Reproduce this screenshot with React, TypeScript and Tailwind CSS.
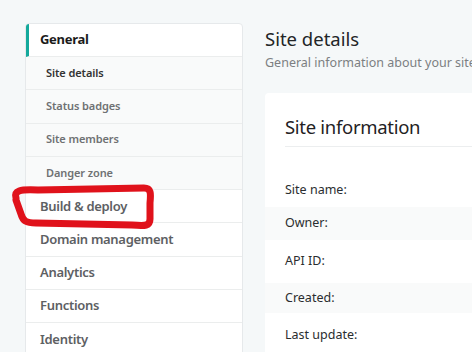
import React from "react";

const font = { fontFamily: '"Noto Sans", "Open Sans", sans-serif' };

export default function App() {
  const sub = [
    { label: "Site details", active: true },
    { label: "Status badges" },
    { label: "Site members" },
    { label: "Danger zone" },
  ];
  const main = ["Build & deploy", "Domain management", "Analytics", "Functions", "Identity"];
  const rows = [
    { label: "Site name:", h: "h-[34px]", stripe: false },
    { label: "Owner:", h: "h-[33px]", stripe: true },
    { label: "API ID:", h: "h-[43px]", stripe: false },
    { label: "Created:", h: "h-[30px]", stripe: true },
    { label: "Last update:", h: "h-[44px]", stripe: false },
  ];
  return (
    <div
      className="relative flex h-[352px] w-[474px] overflow-hidden bg-[#f5f8f9]"
      style={font}
    >
      <nav className="ml-[25px] mt-[23px] w-[218px] shrink-0 self-start overflow-hidden rounded-t-[4px] border border-[#e6e9eb] bg-white">
        <div className="flex h-[33px] items-center border-b border-l-[3px] border-b-[#ebeded] border-l-[#14a99c] pl-[11px] text-[13px] font-bold tracking-[-0.3px] text-[#1b1b1b]">
          General
        </div>
        {sub.map((s) => (
          <div
            key={s.label}
            className={
              "flex h-[33.3px] items-center border-b border-[#ebeded] bg-[#f9fafa] pl-[20px] text-[11px] font-semibold tracking-[-0.1px] " +
              (s.active ? "text-[#333]" : "text-[#6f7173]")
            }
          >
            {s.label}
          </div>
        ))}
        {main.map((m) => (
          <div
            key={m}
            className="flex h-[33.3px] items-center border-b border-[#ebeded] pl-[14px] text-[13px] font-semibold tracking-[-0.3px] text-[#5d6063]"
          >
            {m}
          </div>
        ))}
      </nav>

      <main className="ml-[22px] min-w-0 flex-1 overflow-hidden">
        <h1 className="mt-[26px] whitespace-nowrap text-[18.5px] leading-[26px] text-[#222527]">
          Site details
        </h1>
        <p className="mt-[2px] whitespace-nowrap text-[12.5px] leading-[18px] text-[#7c7f82]">
          General information about your site
        </p>
        <section className="mt-[21px] w-[260px] rounded-l-[4px] bg-white">
          <div className="pl-5 pt-5">
            <h2 className="whitespace-nowrap border-b border-[#eceeef] pb-[5px] text-[18.5px] leading-[28px] tracking-[-0.3px] text-[#1f2224]">
              Site information
            </h2>
          </div>
          <div className="mt-[26px]">
            {rows.map((r) => (
              <div
                key={r.label}
                className={
                  "flex items-center pl-5 text-[12.5px] text-[#2a2d2f] " +
                  r.h +
                  (r.stripe ? " bg-[#f9fafa]" : "")
                }
              >
                {r.label}
              </div>
            ))}
          </div>
        </section>
      </main>
      <div className="w-[2px] shrink-0 bg-white" />

      <svg
        className="pointer-events-none absolute left-0 top-0"
        width="474"
        height="352"
        viewBox="0 0 474 352"
      >
        <path
          d="M16 198 C14 191 19 189 38 190 L144 188 C151 188 151 193 150 203 L150 219 C150 226 146 226 132 225 L36 223 C26 223 23 221 21 214 L16 200"
          fill="none"
          stroke="#e0121b"
          strokeWidth="7"
          strokeLinecap="round"
          strokeLinejoin="round"
        />
      </svg>
    </div>
  );
}
